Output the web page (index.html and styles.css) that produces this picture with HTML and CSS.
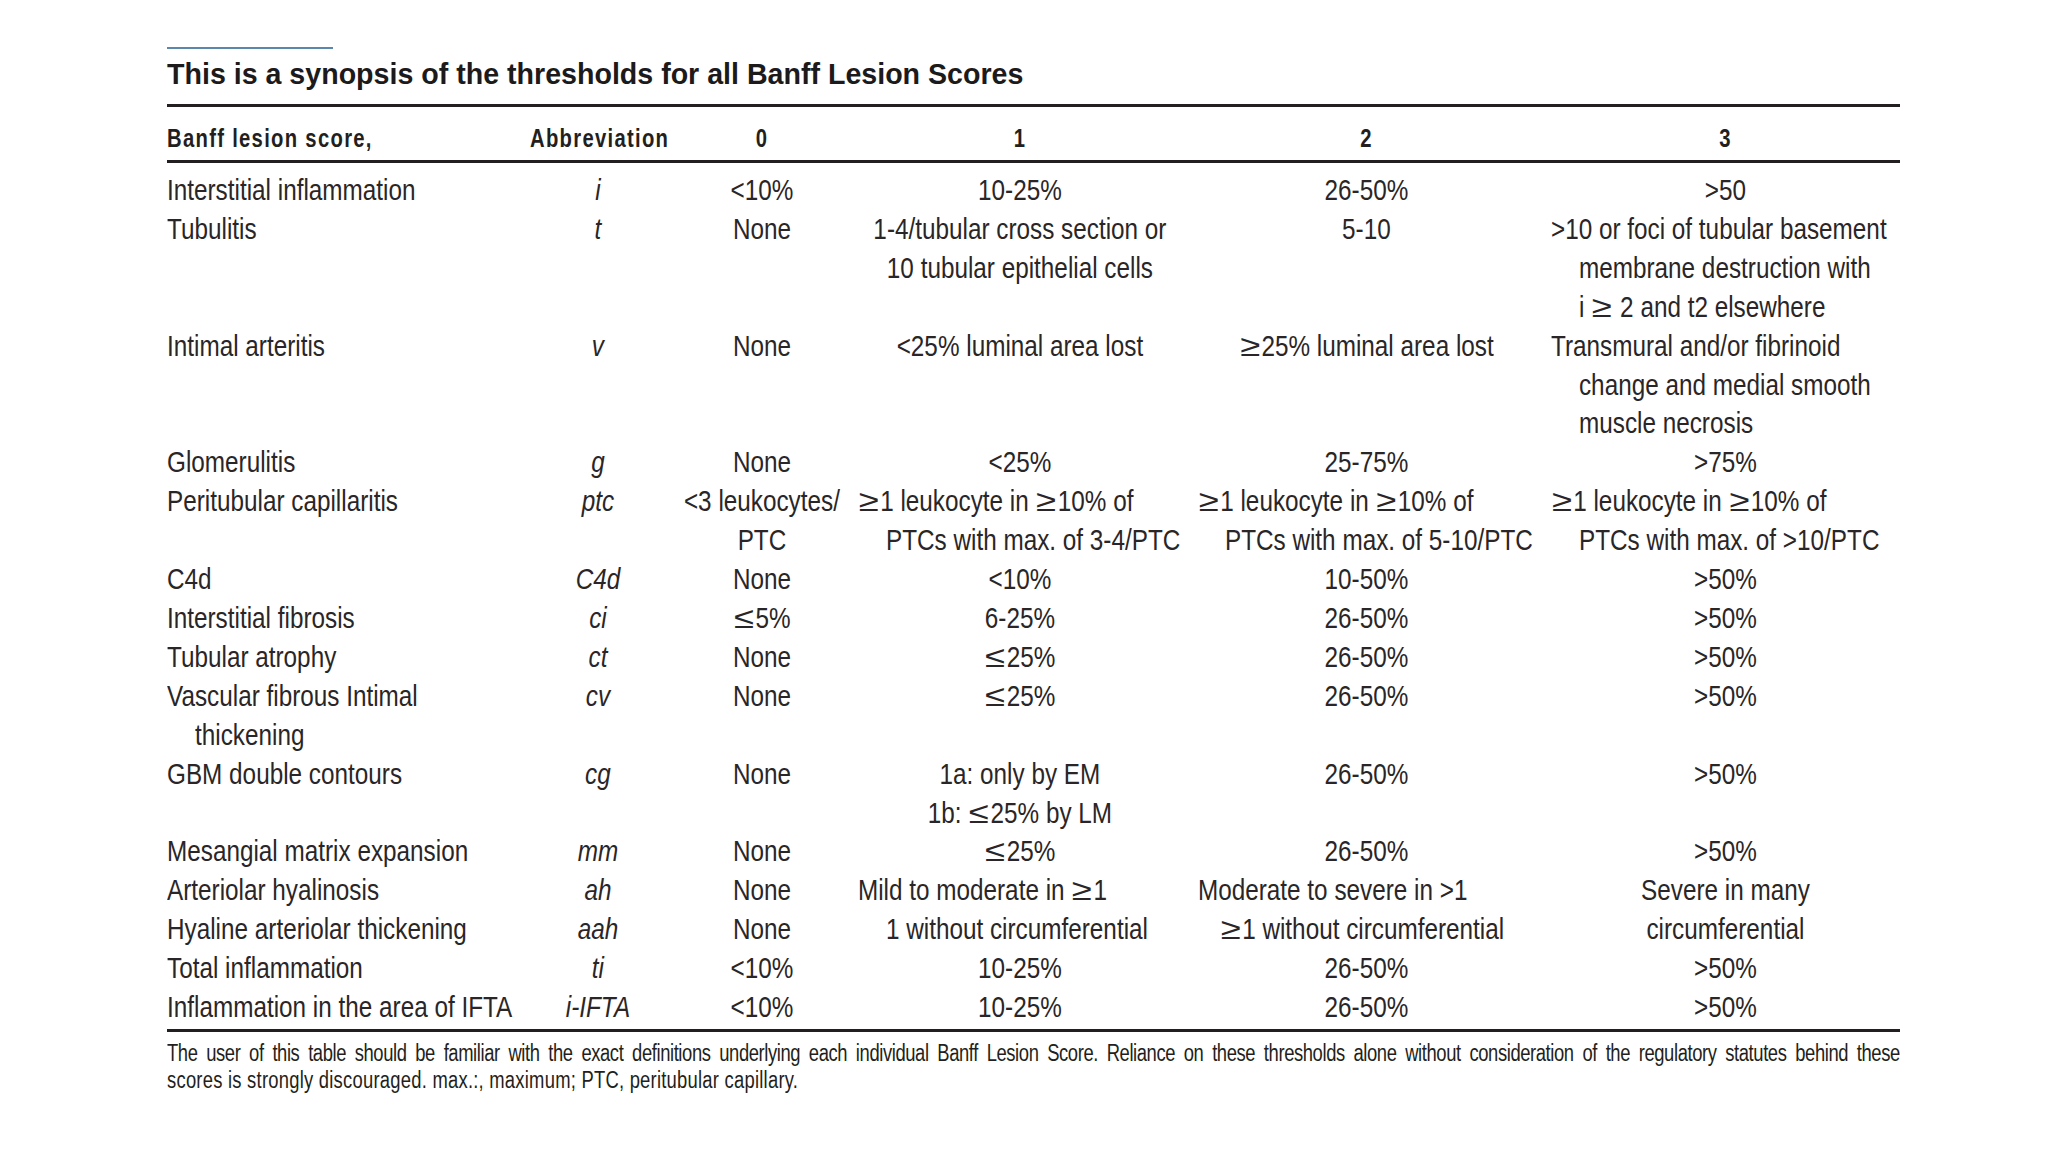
FILE: index.html
```html
<!DOCTYPE html>
<html lang="en">
<head>
<meta charset="utf-8">
<title>Banff Lesion Scores</title>
<link rel="stylesheet" href="styles.css">
</head>
<body>
<div class="page">
  <div class="accent"></div>
  <h1 class="title">This is a synopsis of the thresholds for all Banff Lesion Scores</h1>
  <div class="table">
    <div class="condensed">
      <div class="row head">
        <div class="cell"><div class="ln">Banff lesion score,</div></div>
        <div class="cell c"><div class="ln">Abbreviation</div></div>
        <div class="cell c"><div class="ln">0</div></div>
        <div class="cell c"><div class="ln">1</div></div>
        <div class="cell c"><div class="ln">2</div></div>
        <div class="cell c"><div class="ln">3</div></div>
      </div>
    </div>
    <div class="body">
      <div class="condensed">
        <div class="row">
          <div class="cell"><div class="ln">Interstitial inflammation</div></div>
          <div class="cell c ab"><div class="ln">i</div></div>
          <div class="cell c"><div class="ln">&lt;10%</div></div>
          <div class="cell c"><div class="ln">10-25%</div></div>
          <div class="cell c"><div class="ln">26-50%</div></div>
          <div class="cell c"><div class="ln">&gt;50</div></div>
        </div>
        <div class="row">
          <div class="cell"><div class="ln">Tubulitis</div></div>
          <div class="cell c ab"><div class="ln">t</div></div>
          <div class="cell c"><div class="ln">None</div></div>
          <div class="cell c"><div class="ln">1-4/tubular cross section or</div><div class="ln">10 tubular epithelial cells</div></div>
          <div class="cell c"><div class="ln">5-10</div></div>
          <div class="cell"><div class="ln">&gt;10 or foci of tubular basement</div><div class="ln ind">membrane destruction with</div><div class="ln ind">i <span class="rel">&ge;</span> 2 and t2 elsewhere</div></div>
        </div>
        <div class="row">
          <div class="cell"><div class="ln">Intimal arteritis</div></div>
          <div class="cell c ab"><div class="ln">v</div></div>
          <div class="cell c"><div class="ln">None</div></div>
          <div class="cell c"><div class="ln">&lt;25% luminal area lost</div></div>
          <div class="cell c"><div class="ln"><span class="rel">&ge;</span>25% luminal area lost</div></div>
          <div class="cell"><div class="ln">Transmural and/or fibrinoid</div><div class="ln ind">change and medial smooth</div><div class="ln ind">muscle necrosis</div></div>
        </div>
        <div class="row">
          <div class="cell"><div class="ln">Glomerulitis</div></div>
          <div class="cell c ab"><div class="ln">g</div></div>
          <div class="cell c"><div class="ln">None</div></div>
          <div class="cell c"><div class="ln">&lt;25%</div></div>
          <div class="cell c"><div class="ln">25-75%</div></div>
          <div class="cell c"><div class="ln">&gt;75%</div></div>
        </div>
        <div class="row">
          <div class="cell"><div class="ln">Peritubular capillaritis</div></div>
          <div class="cell c ab"><div class="ln">ptc</div></div>
          <div class="cell c"><div class="ln">&lt;3 leukocytes/</div><div class="ln">PTC</div></div>
          <div class="cell"><div class="ln"><span class="rel">&ge;</span>1 leukocyte in <span class="rel">&ge;</span>10% of</div><div class="ln ind">PTCs with max. of 3-4/PTC</div></div>
          <div class="cell"><div class="ln p16"><span class="rel">&ge;</span>1 leukocyte in <span class="rel">&ge;</span>10% of</div><div class="ln p43">PTCs with max. of 5-10/PTC</div></div>
          <div class="cell"><div class="ln"><span class="rel">&ge;</span>1 leukocyte in <span class="rel">&ge;</span>10% of</div><div class="ln ind">PTCs with max. of &gt;10/PTC</div></div>
        </div>
        <div class="row">
          <div class="cell"><div class="ln">C4d</div></div>
          <div class="cell c ab"><div class="ln">C4d</div></div>
          <div class="cell c"><div class="ln">None</div></div>
          <div class="cell c"><div class="ln">&lt;10%</div></div>
          <div class="cell c"><div class="ln">10-50%</div></div>
          <div class="cell c"><div class="ln">&gt;50%</div></div>
        </div>
        <div class="row">
          <div class="cell"><div class="ln">Interstitial fibrosis</div></div>
          <div class="cell c ab"><div class="ln">ci</div></div>
          <div class="cell c"><div class="ln"><span class="rel">&le;</span>5%</div></div>
          <div class="cell c"><div class="ln">6-25%</div></div>
          <div class="cell c"><div class="ln">26-50%</div></div>
          <div class="cell c"><div class="ln">&gt;50%</div></div>
        </div>
        <div class="row">
          <div class="cell"><div class="ln">Tubular atrophy</div></div>
          <div class="cell c ab"><div class="ln">ct</div></div>
          <div class="cell c"><div class="ln">None</div></div>
          <div class="cell c"><div class="ln"><span class="rel">&le;</span>25%</div></div>
          <div class="cell c"><div class="ln">26-50%</div></div>
          <div class="cell c"><div class="ln">&gt;50%</div></div>
        </div>
        <div class="row">
          <div class="cell"><div class="ln">Vascular fibrous Intimal</div><div class="ln ind">thickening</div></div>
          <div class="cell c ab"><div class="ln">cv</div></div>
          <div class="cell c"><div class="ln">None</div></div>
          <div class="cell c"><div class="ln"><span class="rel">&le;</span>25%</div></div>
          <div class="cell c"><div class="ln">26-50%</div></div>
          <div class="cell c"><div class="ln">&gt;50%</div></div>
        </div>
        <div class="row">
          <div class="cell"><div class="ln">GBM double contours</div></div>
          <div class="cell c ab"><div class="ln">cg</div></div>
          <div class="cell c"><div class="ln">None</div></div>
          <div class="cell c"><div class="ln">1a: only by EM</div><div class="ln">1b: <span class="rel">&le;</span>25% by LM</div></div>
          <div class="cell c"><div class="ln">26-50%</div></div>
          <div class="cell c"><div class="ln">&gt;50%</div></div>
        </div>
        <div class="row">
          <div class="cell"><div class="ln">Mesangial matrix expansion</div></div>
          <div class="cell c ab"><div class="ln">mm</div></div>
          <div class="cell c"><div class="ln">None</div></div>
          <div class="cell c"><div class="ln"><span class="rel">&le;</span>25%</div></div>
          <div class="cell c"><div class="ln">26-50%</div></div>
          <div class="cell c"><div class="ln">&gt;50%</div></div>
        </div>
        <div class="row">
          <div class="cell"><div class="ln">Arteriolar hyalinosis</div></div>
          <div class="cell c ab"><div class="ln">ah</div></div>
          <div class="cell c"><div class="ln">None</div></div>
          <div class="cell"><div class="ln">Mild to moderate in <span class="rel">&ge;</span>1</div></div>
          <div class="cell"><div class="ln p16">Moderate to severe in &gt;1</div></div>
          <div class="cell c"><div class="ln">Severe in many</div></div>
        </div>
        <div class="row">
          <div class="cell"><div class="ln">Hyaline arteriolar thickening</div></div>
          <div class="cell c ab"><div class="ln">aah</div></div>
          <div class="cell c"><div class="ln">None</div></div>
          <div class="cell"><div class="ln ind">1 without circumferential</div></div>
          <div class="cell"><div class="ln p38"><span class="rel">&ge;</span>1 without circumferential</div></div>
          <div class="cell c"><div class="ln">circumferential</div></div>
        </div>
        <div class="row">
          <div class="cell"><div class="ln">Total inflammation</div></div>
          <div class="cell c ab"><div class="ln">ti</div></div>
          <div class="cell c"><div class="ln">&lt;10%</div></div>
          <div class="cell c"><div class="ln">10-25%</div></div>
          <div class="cell c"><div class="ln">26-50%</div></div>
          <div class="cell c"><div class="ln">&gt;50%</div></div>
        </div>
        <div class="row">
          <div class="cell"><div class="ln">Inflammation in the area of IFTA</div></div>
          <div class="cell c ab"><div class="ln">i-IFTA</div></div>
          <div class="cell c"><div class="ln">&lt;10%</div></div>
          <div class="cell c"><div class="ln">10-25%</div></div>
          <div class="cell c"><div class="ln">26-50%</div></div>
          <div class="cell c"><div class="ln">&gt;50%</div></div>
        </div>
      </div>
    </div>
  </div>
  <div class="note">
    <p class="note-line full">The user of this table should be familiar with the exact definitions underlying each individual Banff Lesion Score. Reliance on these thresholds alone without consideration of the regulatory statutes behind these</p>
    <p class="note-line last">scores is strongly discouraged. max.:, maximum; PTC, peritubular capillary.</p>
  </div>
</div>
</body>
</html>
```
FILE: styles.css
```css
html {
  overflow-x: hidden;
}

html, body {
  margin: 0;
  padding: 0;
  background: #ffffff;
}

.page {
  width: 1733px;
  padding: 47px 0 0 167px;
  color: #231f20;
  font-family: "Liberation Sans", Arial, sans-serif;
}

.accent {
  width: 166px;
  height: 2px;
  background: #5b87ad;
}

.title {
  margin: 7px 0 0;
  font-weight: 700;
  font-size: 28.6px;
  line-height: 36px;
  color: #1c1a1a;
}

.table {
  margin-top: 12px;
  border-top: 3px solid #231f20;
  border-bottom: 3px solid #231f20;
}

/* Helvetica Condensed look: lay out at full width, then condense horizontally */
.condensed {
  width: 2139.5px;
  transform: scaleX(0.81);
  transform-origin: 0 0;
}

.row {
  display: grid;
  grid-template-columns: 448.1px 167.9px 237px 400px 455.6px 430.9px;
}

.head {
  padding: 11px 0 2px;
  font-weight: 700;
  font-size: 25px;
  line-height: 40px;
  letter-spacing: 1.6px;
}

.body {
  border-top: 3px solid #231f20;
  padding: 8px 0 2px;
  font-size: 30px;
  line-height: 38.9px;
  color: #2a2627;
}

.ln {
  white-space: nowrap;
}

.c {
  text-align: center;
}

.ab {
  font-style: italic;
}

/* wide "≥ / ≤" as set in the source typeface */
.rel {
  display: inline-block;
  margin: 0 6px 0 5px;
  transform: scaleX(1.5);
}

.ind {
  padding-left: 34.6px;
}

.p16 {
  padding-left: 19.8px;
}

.p38 {
  padding-left: 46.9px;
}

.p43 {
  padding-left: 53.1px;
}

.note {
  width: 2166px;
  padding-top: 8px;
  font-size: 23px;
  line-height: 27px;
  transform: scaleX(0.8);
  transform-origin: 0 0;
}

.note-line {
  margin: 0;
  white-space: nowrap;
}

.note-line.full {
  letter-spacing: -0.5px;
  text-align: justify;
  text-align-last: justify;
}

.note-line.last {
  letter-spacing: 0.3px;
}
```
